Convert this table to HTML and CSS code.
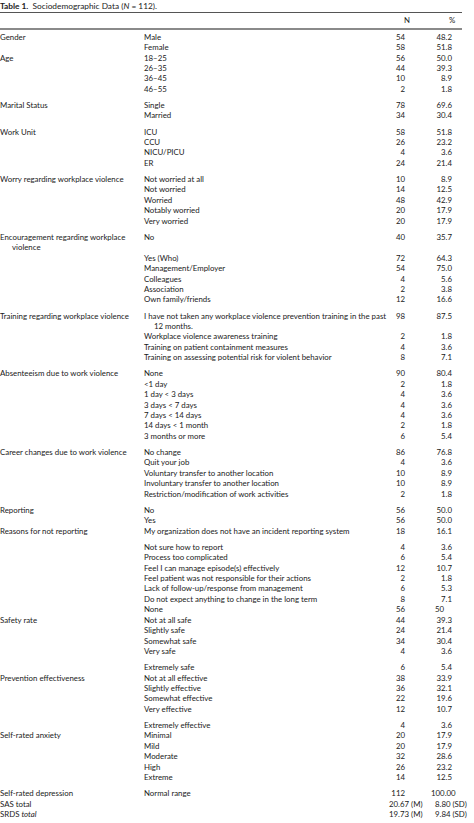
FILE: index.html
```html
<!DOCTYPE html>
<html lang="en">
<head>
<meta charset="utf-8">
<title>Table 1. Sociodemographic Data</title>
<link rel="stylesheet" href="styles.css">
</head>
<body>
<div class="title"><b>Table 1.</b>&nbsp; Sociodemographic Data (<i>N</i> = 112).</div>
<div class="table">
  <div class="head"><span></span><span></span><span class="hn">N</span><span class="hp">%</span></div>
  <div class="rows">
    <div class="row"><span class="lab">Gender</span><span class="cat">Male</span><span class="n">54</span><span class="p">48.2</span></div>
    <div class="row"><span class="lab"></span><span class="cat">Female</span><span class="n">58</span><span class="p">51.8</span></div>
    <div class="row"><span class="lab">Age</span><span class="cat">18–25</span><span class="n">56</span><span class="p">50.0</span></div>
    <div class="row"><span class="lab"></span><span class="cat">26–35</span><span class="n">44</span><span class="p">39.3</span></div>
    <div class="row"><span class="lab"></span><span class="cat">36–45</span><span class="n">10</span><span class="p">8.9</span></div>
    <div class="row"><span class="lab"></span><span class="cat">46–55</span><span class="n">2</span><span class="p">1.8</span></div>

    <div class="row gap"><span class="lab">Marital Status</span><span class="cat">Single</span><span class="n">78</span><span class="p">69.6</span></div>
    <div class="row"><span class="lab"></span><span class="cat">Married</span><span class="n">34</span><span class="p">30.4</span></div>

    <div class="row gap"><span class="lab">Work Unit</span><span class="cat">ICU</span><span class="n">58</span><span class="p">51.8</span></div>
    <div class="row"><span class="lab"></span><span class="cat">CCU</span><span class="n">26</span><span class="p">23.2</span></div>
    <div class="row"><span class="lab"></span><span class="cat">NICU/PICU</span><span class="n">4</span><span class="p">3.6</span></div>
    <div class="row"><span class="lab"></span><span class="cat">ER</span><span class="n">24</span><span class="p">21.4</span></div>

    <div class="row gap"><span class="lab">Worry regarding workplace violence</span><span class="cat">Not worried at all</span><span class="n">10</span><span class="p">8.9</span></div>
    <div class="row"><span class="lab"></span><span class="cat">Not worried</span><span class="n">14</span><span class="p">12.5</span></div>
    <div class="row"><span class="lab"></span><span class="cat">Worried</span><span class="n">48</span><span class="p">42.9</span></div>
    <div class="row"><span class="lab"></span><span class="cat">Notably worried</span><span class="n">20</span><span class="p">17.9</span></div>
    <div class="row"><span class="lab"></span><span class="cat">Very worried</span><span class="n">20</span><span class="p">17.9</span></div>

    <div class="row gap"><span class="lab hang">Encouragement regarding workplace<br>violence</span><span class="cat">No</span><span class="n">40</span><span class="p">35.7</span></div>
    <div class="row"><span class="lab"></span><span class="cat">Yes (Who)</span><span class="n">72</span><span class="p">64.3</span></div>
    <div class="row"><span class="lab"></span><span class="cat">Management/Employer</span><span class="n">54</span><span class="p">75.0</span></div>
    <div class="row"><span class="lab"></span><span class="cat">Colleagues</span><span class="n">4</span><span class="p">5.6</span></div>
    <div class="row"><span class="lab"></span><span class="cat">Association</span><span class="n">2</span><span class="p">3.8</span></div>
    <div class="row"><span class="lab"></span><span class="cat">Own family/friends</span><span class="n">12</span><span class="p">16.6</span></div>

    <div class="row gap"><span class="lab">Training regarding workplace violence</span><span class="cat hang2">I have not taken any workplace violence prevention training in the past<br>12 months.</span><span class="n">98</span><span class="p">87.5</span></div>
    <div class="row"><span class="lab"></span><span class="cat">Workplace violence awareness training</span><span class="n">2</span><span class="p">1.8</span></div>
    <div class="row"><span class="lab"></span><span class="cat">Training on patient containment measures</span><span class="n">4</span><span class="p">3.6</span></div>
    <div class="row"><span class="lab"></span><span class="cat">Training on assessing potential risk for violent behavior</span><span class="n">8</span><span class="p">7.1</span></div>

    <div class="row gap"><span class="lab">Absenteeism due to work violence</span><span class="cat">None</span><span class="n">90</span><span class="p">80.4</span></div>
    <div class="row"><span class="lab"></span><span class="cat">&lt;1 day</span><span class="n">2</span><span class="p">1.8</span></div>
    <div class="row"><span class="lab"></span><span class="cat">1 day &lt; 3 days</span><span class="n">4</span><span class="p">3.6</span></div>
    <div class="row"><span class="lab"></span><span class="cat">3 days &lt; 7 days</span><span class="n">4</span><span class="p">3.6</span></div>
    <div class="row"><span class="lab"></span><span class="cat">7 days &lt; 14 days</span><span class="n">4</span><span class="p">3.6</span></div>
    <div class="row"><span class="lab"></span><span class="cat">14 days &lt; 1 month</span><span class="n">2</span><span class="p">1.8</span></div>
    <div class="row"><span class="lab"></span><span class="cat">3 months or more</span><span class="n">6</span><span class="p">5.4</span></div>

    <div class="row gap"><span class="lab">Career changes due to work violence</span><span class="cat">No change</span><span class="n">86</span><span class="p">76.8</span></div>
    <div class="row"><span class="lab"></span><span class="cat">Quit your job</span><span class="n">4</span><span class="p">3.6</span></div>
    <div class="row"><span class="lab"></span><span class="cat">Voluntary transfer to another location</span><span class="n">10</span><span class="p">8.9</span></div>
    <div class="row"><span class="lab"></span><span class="cat">Involuntary transfer to another location</span><span class="n">10</span><span class="p">8.9</span></div>
    <div class="row"><span class="lab"></span><span class="cat">Restriction/modification of work activities</span><span class="n">2</span><span class="p">1.8</span></div>

    <div class="row gap"><span class="lab">Reporting</span><span class="cat">No</span><span class="n">56</span><span class="p">50.0</span></div>
    <div class="row"><span class="lab"></span><span class="cat">Yes</span><span class="n">56</span><span class="p">50.0</span></div>
    <div class="row"><span class="lab">Reasons for not reporting</span><span class="cat">My organization does not have an incident reporting system</span><span class="n">18</span><span class="p">16.1</span></div>

    <div class="row gap"><span class="lab"></span><span class="cat">Not sure how to report</span><span class="n">4</span><span class="p">3.6</span></div>
    <div class="row"><span class="lab"></span><span class="cat">Process too complicated</span><span class="n">6</span><span class="p">5.4</span></div>
    <div class="row"><span class="lab"></span><span class="cat">Feel I can manage episode(s) effectively</span><span class="n">12</span><span class="p">10.7</span></div>
    <div class="row"><span class="lab"></span><span class="cat">Feel patient was not responsible for their actions</span><span class="n">2</span><span class="p">1.8</span></div>
    <div class="row"><span class="lab"></span><span class="cat">Lack of follow-up/response from management</span><span class="n">6</span><span class="p">5.3</span></div>
    <div class="row"><span class="lab"></span><span class="cat">Do not expect anything to change in the long term</span><span class="n">8</span><span class="p">7.1</span></div>
    <div class="row"><span class="lab"></span><span class="cat">None</span><span class="n">56</span><span class="p x50">50</span></div>
    <div class="row"><span class="lab">Safety rate</span><span class="cat">Not at all safe</span><span class="n">44</span><span class="p">39.3</span></div>
    <div class="row"><span class="lab"></span><span class="cat">Slightly safe</span><span class="n">24</span><span class="p">21.4</span></div>
    <div class="row"><span class="lab"></span><span class="cat">Somewhat safe</span><span class="n">34</span><span class="p">30.4</span></div>
    <div class="row"><span class="lab"></span><span class="cat">Very safe</span><span class="n">4</span><span class="p">3.6</span></div>

    <div class="row gap"><span class="lab"></span><span class="cat">Extremely safe</span><span class="n">6</span><span class="p">5.4</span></div>
    <div class="row"><span class="lab">Prevention effectiveness</span><span class="cat">Not at all effective</span><span class="n">38</span><span class="p">33.9</span></div>
    <div class="row"><span class="lab"></span><span class="cat">Slightly effective</span><span class="n">36</span><span class="p">32.1</span></div>
    <div class="row"><span class="lab"></span><span class="cat">Somewhat effective</span><span class="n">22</span><span class="p">19.6</span></div>
    <div class="row"><span class="lab"></span><span class="cat">Very effective</span><span class="n">12</span><span class="p">10.7</span></div>

    <div class="row gap"><span class="lab"></span><span class="cat">Extremely effective</span><span class="n">4</span><span class="p">3.6</span></div>
    <div class="row"><span class="lab">Self-rated anxiety</span><span class="cat">Minimal</span><span class="n">20</span><span class="p">17.9</span></div>
    <div class="row"><span class="lab"></span><span class="cat">Mild</span><span class="n">20</span><span class="p">17.9</span></div>
    <div class="row"><span class="lab"></span><span class="cat">Moderate</span><span class="n">32</span><span class="p">28.6</span></div>
    <div class="row"><span class="lab"></span><span class="cat">High</span><span class="n">26</span><span class="p">23.2</span></div>
    <div class="row"><span class="lab"></span><span class="cat">Extreme</span><span class="n">14</span><span class="p">12.5</span></div>

    <div class="row gap"><span class="lab">Self-rated depression</span><span class="cat">Normal range</span><span class="n">112</span><span class="p x100">100.00</span></div>
    <div class="row"><span class="lab">SAS total</span><span class="cat"></span><span class="n m">20.67 (M)</span><span class="p sd">8.80 (SD)</span></div>
    <div class="row"><span class="lab">SRDS <i>total</i></span><span class="cat"></span><span class="n m">19.73 (M)</span><span class="p sd">9.84 (SD)</span></div>
  </div>
</div>
</body>
</html>
```

FILE: styles.css
```css
html, body {
  margin: 0;
  padding: 0;
  background: #ffffff;
}

body {
  color: #1a1a1a;
  font-family: Lato, "Liberation Sans", sans-serif;
  font-size: 7.85px;
}

.title {
  height: 12px;
  line-height: 12px;
  font-size: 8.3px;
  white-space: nowrap;
}

.table {
  width: 462px;
  border-top: 1px solid #555555;
}

.head,
.row {
  display: grid;
  grid-template-columns: 144px 240px 21px 47px;
}

.head {
  height: 15px;
  line-height: 15px;
  border-bottom: 2px solid #8a8a8a;
}

.hn {
  padding-left: 20px;
}

.hp {
  padding-left: 44px;
}

.rows {
  padding-top: 1.8px;
}

.row {
  line-height: 10.4px;
}

.row.gap {
  margin-top: 5.8px;
}

.lab,
.cat {
  white-space: nowrap;
}

.hang {
  padding-left: 12px;
  text-indent: -12px;
}

.hang2 {
  padding-left: 10px;
  text-indent: -10px;
}

.n,
.p {
  text-align: right;
  white-space: nowrap;
}

.n.m {
  text-align: left;
  padding-left: 5px;
}

.p.x50,
.p.sd {
  text-align: left;
  padding-left: 30px;
}

.p.x100 {
  text-align: left;
  padding-left: 26px;
}
```
